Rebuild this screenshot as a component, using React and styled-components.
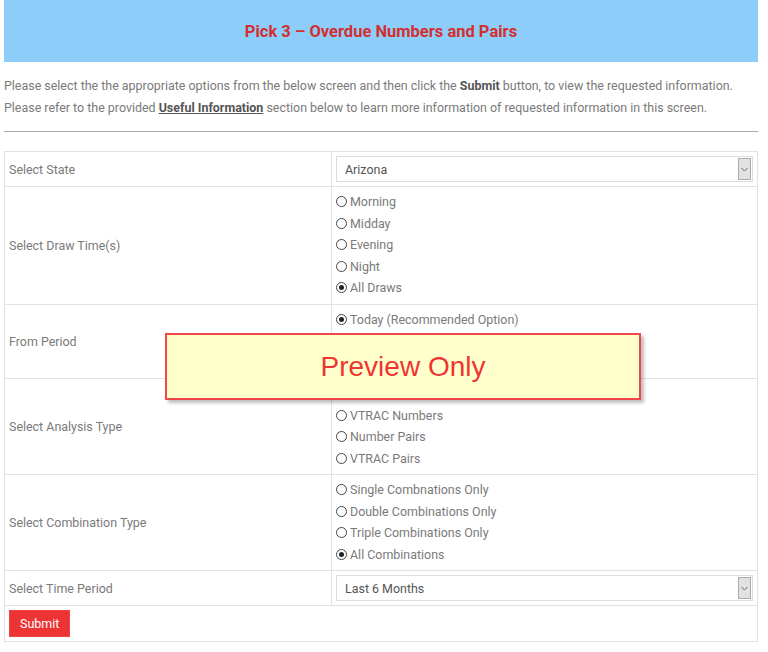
import React from "react";
import styled, { createGlobalStyle } from "styled-components";

const GlobalStyle = createGlobalStyle`
  html, body {
    margin: 0;
    padding: 0;
    background: #fff;
  }
  body {
    font-family: Roboto, "Liberation Sans", Arial, sans-serif;
  }
`;

const Page = styled.div`
  width: 754px;
  padding: 0 4px;
  position: relative;
  color: #777;
`;

const Header = styled.div`
  height: 62px;
  background: #8dcdf9;
  display: flex;
  align-items: center;
  justify-content: center;
  & h1 {
    margin: 0;
    font-size: 16.5px;
    font-weight: 700;
    color: #d32f2f;
  }
`;

const Intro = styled.div`
  padding-top: 13px;
  font-size: 12.45px;
  line-height: 22px;
  color: #7a7a7a;
  & p {
    margin: 0;
  }
  & b {
    color: #555;
  }
  & u {
    color: #555;
    font-weight: 700;
  }
`;

const Rule = styled.hr`
  margin: 12px 0 19px;
  border: 0;
  border-top: 1px solid #aaa;
`;

const Table = styled.table`
  width: 100%;
  border-collapse: collapse;
  border: 1px solid #e3e3e3;
  font-size: 12.45px;
  & td {
    border: 1px solid #e3e3e3;
    padding: 4px;
    vertical-align: middle;
  }
`;

const Label = styled.td`
  width: 318px;
  color: #7a7a7a;
`;

const Select = styled.div`
  height: 26px;
  box-sizing: border-box;
  border: 1px solid #ddd;
  display: flex;
  align-items: center;
  justify-content: space-between;
  padding: 0 1px 0 8px;
  color: #555;
`;

const Arrow = styled.span`
  width: 13px;
  height: 22px;
  box-sizing: border-box;
  border: 1px solid #aaa;
  background: #e2e2e2;
  display: flex;
  align-items: center;
  justify-content: center;
`;

const RadioList = styled.div`
  display: flex;
  flex-direction: column;
  padding: 0 0 1px;
`;

const Radio = styled.label`
  display: flex;
  align-items: center;
  gap: 3px;
  height: 21.5px;
  color: #7a7a7a;
  & i {
    width: 9px;
    height: 9px;
    border: 1px solid #444;
    border-radius: 50%;
    display: flex;
    align-items: center;
    justify-content: center;
    background: #fff;
  }
  & i::after {
    content: "";
    width: 5px;
    height: 5px;
    border-radius: 50%;
    background: ${(p) => (p.checked ? "#222" : "transparent")};
  }
`;

const SubmitButton = styled.button`
  height: 27px;
  padding: 0 10px;
  border: 1px solid #e44;
  background: #ee3334;
  color: #fff;
  font-family: Roboto, "Liberation Sans", Arial, sans-serif;
  font-size: 12.45px;
  cursor: pointer;
`;

const PreviewBox = styled.div`
  position: absolute;
  left: 165px;
  top: 333px;
  width: 476px;
  height: 67px;
  box-sizing: border-box;
  background: #ffffcc;
  border: 2px solid #f04848;
  box-shadow: 3px 3px 3px rgba(0, 0, 0, 0.25);
  display: flex;
  align-items: center;
  justify-content: center;
  font-family: "Liberation Sans", Arial, sans-serif;
  font-size: 28px;
  color: #f03434;
`;

const SelectBox = ({ value }) => (
  <Select>
    <span>{value}</span>
    <Arrow>
      <svg width="7" height="5" viewBox="0 0 7 5">
        <path d="M0.5 1 L3.5 4 L6.5 1" fill="none" stroke="#666" strokeWidth="1" />
      </svg>
    </Arrow>
  </Select>
);

const Radios = ({ options, checked }) => (
  <RadioList>
    {options.map((o) => (
      <Radio key={o} checked={o === checked}>
        <i />
        {o}
      </Radio>
    ))}
  </RadioList>
);

export default function App() {
  return (
    <>
      <GlobalStyle />
      <Page>
        <Header>
          <h1>Pick 3 – Overdue Numbers and Pairs</h1>
        </Header>
        <Intro>
          <p>
            Please select the the appropriate options from the below screen and then click the <b>Submit</b> button, to view
            the requested information.
          </p>
          <p>
            Please refer to the provided <u>Useful Information</u> section below to learn more information of requested
            information in this screen.
          </p>
        </Intro>
        <Rule />
        <Table>
          <tbody>
            <tr>
              <Label>Select State</Label>
              <td>
                <SelectBox value="Arizona" />
              </td>
            </tr>
            <tr>
              <Label>Select Draw Time(s)</Label>
              <td>
                <Radios options={["Morning", "Midday", "Evening", "Night", "All Draws"]} checked="All Draws" />
              </td>
            </tr>
            <tr>
              <Label>From Period</Label>
              <td>
                <Radios
                  options={["Today (Recommended Option)", "Specific Date", "Specific Drawing"]}
                  checked="Today (Recommended Option)"
                />
              </td>
            </tr>
            <tr>
              <Label>Select Analysis Type</Label>
              <td>
                <Radios
                  options={["Overdue Numbers", "VTRAC Numbers", "Number Pairs", "VTRAC Pairs"]}
                  checked="Overdue Numbers"
                />
              </td>
            </tr>
            <tr>
              <Label>Select Combination Type</Label>
              <td>
                <Radios
                  options={[
                    "Single Combnations Only",
                    "Double Combinations Only",
                    "Triple Combinations Only",
                    "All Combinations",
                  ]}
                  checked="All Combinations"
                />
              </td>
            </tr>
            <tr>
              <Label>Select Time Period</Label>
              <td>
                <SelectBox value="Last 6 Months" />
              </td>
            </tr>
            <tr>
              <td colSpan={2}>
                <SubmitButton>Submit</SubmitButton>
              </td>
            </tr>
          </tbody>
        </Table>
        <PreviewBox>Preview Only</PreviewBox>
      </Page>
    </>
  );
}
